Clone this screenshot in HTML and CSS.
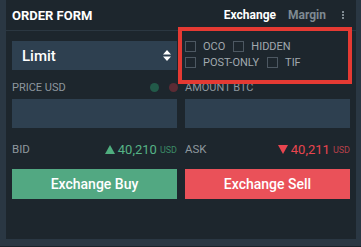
FILE: index.html
```html
<!DOCTYPE html>
<html lang="en">
<head>
    <meta charset="UTF-8">
    <title>Order Form</title>
    <link rel="stylesheet" href="styles.css">
</head>
<body>
    <div class="panel">
        <header class="panel-head">
            <h1>ORDER FORM</h1>
            <nav class="tabs">
                <span class="tab active">Exchange</span>
                <span class="tab">Margin</span>
                <span class="kebab"><i></i><i></i><i></i></span>
            </nav>
        </header>
        <div class="form">
            <div class="select">
                <span>Limit</span>
                <svg class="arrows" width="8" height="11" viewBox="0 0 8 11">
                    <path d="M4 0 L8 4.5 H0 Z M0 6.5 H8 L4 11 Z" fill="#fff"/>
                </svg>
            </div>
            <div class="options">
                <div class="option-row">
                    <label class="check"><span class="box"></span>OCO</label>
                    <label class="check"><span class="box"></span>HIDDEN</label>
                </div>
                <div class="option-row">
                    <label class="check"><span class="box"></span>POST-ONLY</label>
                    <label class="check"><span class="box"></span>TIF</label>
                </div>
            </div>

            <div class="field-label">
                <span>PRICE USD</span>
                <span class="dots"><i class="dot green"></i><i class="dot red"></i></span>
            </div>
            <div class="field-label">
                <span>AMOUNT BTC</span>
            </div>

            <div class="input"></div>
            <div class="input"></div>

            <div class="quote">
                <span>BID</span>
                <span class="price up"><b class="tri"></b>40,210<small>USD</small></span>
            </div>
            <div class="quote">
                <span>ASK</span>
                <span class="price down"><b class="tri"></b>40,211<small>USD</small></span>
            </div>

            <button class="btn buy">Exchange Buy</button>
            <button class="btn sell">Exchange Sell</button>
        </div>
        <div class="highlight"></div>
    </div>
</body>
</html>
```

FILE: styles.css
```css
body {
    margin: 0;
    height: 246px;
    background-color: #2a3743;
    border-bottom: 1px solid #1a2229;
    font-family: Roboto, 'Liberation Sans', sans-serif;
    overflow: hidden;
}

.panel {
    position: relative;
    margin-left: 6px;
    width: 350px;
    height: 239px;
    background-color: #1d262d;
}

.panel-head {
    height: 30px;
    display: flex;
    align-items: center;
    justify-content: space-between;
    padding: 0 12px 0 6px;
    border-bottom: 1px solid #2b3741;
}

h1 {
    margin: 0;
    font-size: 13px;
    font-weight: 700;
    color: #fff;
}

.tabs {
    display: flex;
    align-items: center;
    gap: 12px;
}

.tab {
    font-size: 12px;
    font-weight: 700;
    color: #7f8a92;
}

.tab.active {
    color: #fff;
}

.kebab {
    display: flex;
    flex-direction: column;
    gap: 1px;
    margin-left: 4px;
}

.kebab i {
    width: 2px;
    height: 2px;
    background-color: #7f8a92;
}

.form {
    display: grid;
    grid-template-columns: 165px 165px;
    column-gap: 8px;
    padding: 10px 6px 0;
}

.select {
    height: 29px;
    background-color: #2e4050;
    display: flex;
    align-items: center;
    justify-content: space-between;
    padding: 0 6px 0 10px;
    color: #fff;
    font-size: 15px;
    font-weight: 500;
}

.options {
    display: flex;
    flex-direction: column;
    gap: 5px;
}

.option-row {
    display: flex;
    gap: 8px;
}

.check {
    display: flex;
    align-items: center;
    gap: 7px;
    height: 11px;
    font-size: 11px;
    color: #a1a9af;
}

.box {
    width: 9px;
    height: 9px;
    border: 1px solid #4d5862;
}

.field-label {
    height: 19px;
    margin-top: 10px;
    display: flex;
    align-items: center;
    justify-content: space-between;
    font-size: 11px;
    color: #8e979e;
    line-height: 14px;
    padding-bottom: 4px;
    box-sizing: border-box;
}

.dots {
    display: flex;
    gap: 10px;
    margin-right: -1px;
}

.dot {
    width: 9px;
    height: 9px;
    border-radius: 50%;
}

.dot.green {
    background-color: #225a49;
}

.dot.red {
    background-color: #5b2b34;
}

.input {
    height: 29px;
    background-color: #2e4050;
}

.quote {
    height: 41px;
    display: flex;
    align-items: center;
    justify-content: space-between;
    font-size: 11.5px;
    color: #8e979e;
    padding-top: 1px;
    box-sizing: border-box;
}

.price {
    display: flex;
    align-items: center;
    font-size: 13px;
}

.price small {
    font-size: 9px;
    margin-left: 3px;
    margin-top: 2px;
}

.tri {
    width: 0;
    height: 0;
    border-left: 5px solid transparent;
    border-right: 5px solid transparent;
    margin-right: 3px;
}

.up {
    color: #55b386;
}

.up small {
    color: #3b8a66;
}

.up .tri {
    border-bottom: 9px solid #4fae7f;
}

.down {
    color: #e8454f;
}

.down small {
    color: #b5404a;
}

.down .tri {
    border-top: 9px solid #e8454f;
}

.btn {
    height: 30px;
    border: none;
    color: #fff;
    font-family: Roboto, 'Liberation Sans', sans-serif;
    font-size: 14px;
    font-weight: 500;
    padding: 0;
}

.buy {
    background-color: #52a882;
}

.sell {
    background-color: #ea5159;
}

/* annotation frame drawn over the options */
.highlight {
    position: absolute;
    left: 172px;
    top: 27px;
    width: 166px;
    height: 49px;
    border: 4px solid #e53a33;
}
```
